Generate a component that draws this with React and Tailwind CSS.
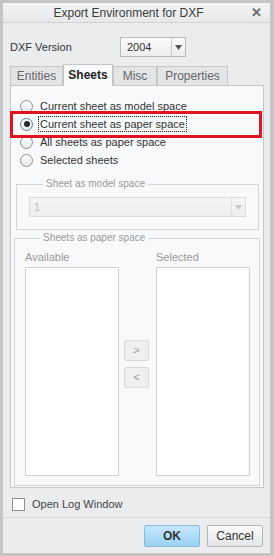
function Radio({ label, checked, focused }) {
  return (
    <div className="flex h-[18px] items-center">
      <span
        className={`flex h-[13px] w-[13px] items-center justify-center rounded-full border bg-gradient-to-b from-white to-[#e6e7e9] ${
          checked ? 'border-[#5f7f9c]' : 'border-[#8e8f91]'
        }`}
      >
        {checked && <span className="h-[6px] w-[6px] rounded-full bg-[#2a2a2a]" />}
      </span>
      <span className={`ml-[6px] px-[1px] leading-[14px] ${focused ? 'outline-1 outline-dotted outline-[#222]' : ''}`}>
        {label}
      </span>
    </div>
  );
}

function Tab({ label, active, width }) {
  if (active) {
    return (
      <div
        className={`relative z-10 -mb-px flex h-[22px] ${width} items-center justify-center border border-b-0 border-[#c6c7c9] bg-[#f8f9fb] pb-[2px] font-bold text-[#222]`}
      >
        {label}
      </div>
    );
  }
  return (
    <div className={`flex h-[19px] ${width} items-center justify-center border border-b-0 border-[#c6c7c9] bg-[#e4e5e7] text-[#666]`}>
      {label}
    </div>
  );
}

function MiniButton({ children }) {
  return (
    <div className="flex h-[21px] w-[25px] items-center justify-center rounded-[2px] border border-[#d8d9db] bg-[#eeeff1] text-[11px] text-[#9a9a9a]">
      {children}
    </div>
  );
}

export default function App() {
  return (
    <div className="h-[556px] w-[274px] bg-[#c4c5c7] pt-[3px] pr-[4px] pb-[3px] pl-[3px] font-['Liberation_Sans',Arial,sans-serif] text-[11px] text-[#333]">
      <div className="flex h-full flex-col bg-[#ebecee]">
        {/* title bar */}
        <div className="flex h-[20px] items-center border-b border-[#d2d3d5] bg-gradient-to-b from-[#f3f4f5] to-[#e7e8ea]">
          <div className="flex-1 pl-[6px] text-center text-[12px] text-[#3a3a3a]">Export Environment for DXF</div>
          <div className="w-[22px] pr-[6px] text-center text-[13px] font-bold leading-none text-[#6a6a6a]">✕</div>
        </div>

        <div className="pl-[7px] pr-[6px]">
          {/* version */}
          <div className="mt-[14px] flex h-[20px] items-center">
            <div className="w-[110px]">DXF Version</div>
            <div className="flex h-[20px] w-[66px] items-stretch border border-[#b9babc] bg-gradient-to-b from-[#fafafa] to-[#eceded]">
              <div className="flex flex-1 items-center pl-[6px]">2004</div>
              <div className="flex w-[14px] items-center justify-center border-l border-[#c9cacc]">
                <svg width="7" height="5" viewBox="0 0 7 5">
                  <path d="M0 0h7L3.5 5z" fill="#555" />
                </svg>
              </div>
            </div>
          </div>

          {/* tabs */}
          <div className="mt-[7px] flex items-end text-[12px]">
            <Tab label="Entities" width="w-[53px]" />
            <Tab label="Sheets" width="w-[50px]" active />
            <Tab label="Misc" width="w-[44px]" />
            <Tab label="Properties" width="w-[71px]" />
          </div>

          {/* panel */}
          <div className="relative flex h-[403px] flex-col border border-[#c6c7c9] bg-[#f8f9fb] pt-[11px]">
            <div className="pl-[9px]">
              <Radio label="Current sheet as model space" />
              <Radio label="Current sheet as paper space" checked focused />
              <Radio label="All sheets as paper space" />
              <Radio label="Selected sheets" />
            </div>

            <fieldset className="mt-[9px] ml-[5px] mr-[4px] border border-[#d4d5d7] px-[12px] pb-[12px]">
              <legend className="ml-[14px] px-[3px] text-[10px] leading-[12px] text-[#9a9a9a]">Sheet as model space</legend>
              <div className="mt-[7px] flex h-[20px] items-stretch border border-[#dcdddf] bg-gradient-to-b from-[#f5f6f7] to-[#ecedef]">
                <div className="flex flex-1 items-center pl-[4px] text-[#bdbdbd]">1</div>
                <div className="flex w-[14px] items-center justify-center border-l border-[#e0e1e3]">
                  <svg width="7" height="5" viewBox="0 0 7 5">
                    <path d="M0 0h7L3.5 5z" fill="#c8c8c8" />
                  </svg>
                </div>
              </div>
            </fieldset>

            <fieldset className="mt-[2px] ml-[3px] mr-[3px] border border-[#d4d5d7] pl-[10px] pb-[9px]">
              <legend className="ml-[15px] px-[3px] text-[10px] leading-[12px] text-[#9a9a9a]">Sheets as paper space</legend>
              <div className="mt-[5px] flex text-[#9a9a9a]">
                <div className="w-[131px]">Available</div>
                <div>Selected</div>
              </div>
              <div className="mt-[1px] flex">
                <div className="h-[209px] w-[94px] border border-[#cfd0d2] bg-white" />
                <div className="ml-[5px] flex flex-col gap-[6px] pt-[73px]">
                  <MiniButton>&gt;</MiniButton>
                  <MiniButton>&lt;</MiniButton>
                </div>
                <div className="ml-[7px] h-[209px] w-[94px] border border-[#cfd0d2] bg-white" />
              </div>
            </fieldset>

            <div className="absolute left-[-1px] top-[25px] h-[27px] w-[252px] border-[3px] border-[#e0141e]" />
          </div>

          {/* log checkbox */}
          <div className="mt-[9px] flex h-[14px] items-center">
            <div className="ml-[2px] h-[13px] w-[13px] border border-[#8f9092] bg-white" />
            <div className="ml-[7px] text-[#444]">Open Log Window</div>
          </div>
        </div>

        <div className="mt-[6px] border-t border-[#d6d7d9]" />

        <div className="mt-[7px] flex justify-end gap-[7px] pr-[7px] text-[12px]">
          <div className="flex h-[22px] w-[56px] items-center justify-center rounded-[2px] border border-[#86bde0] bg-gradient-to-b from-[#c6e7fb] to-[#99d1f2] font-bold text-[#333]">
            OK
          </div>
          <div className="flex h-[22px] w-[56px] items-center justify-center rounded-[2px] border border-[#b3b4b6] bg-gradient-to-b from-[#fbfbfb] to-[#e4e5e7] text-[#333]">
            Cancel
          </div>
        </div>
      </div>
    </div>
  );
}
